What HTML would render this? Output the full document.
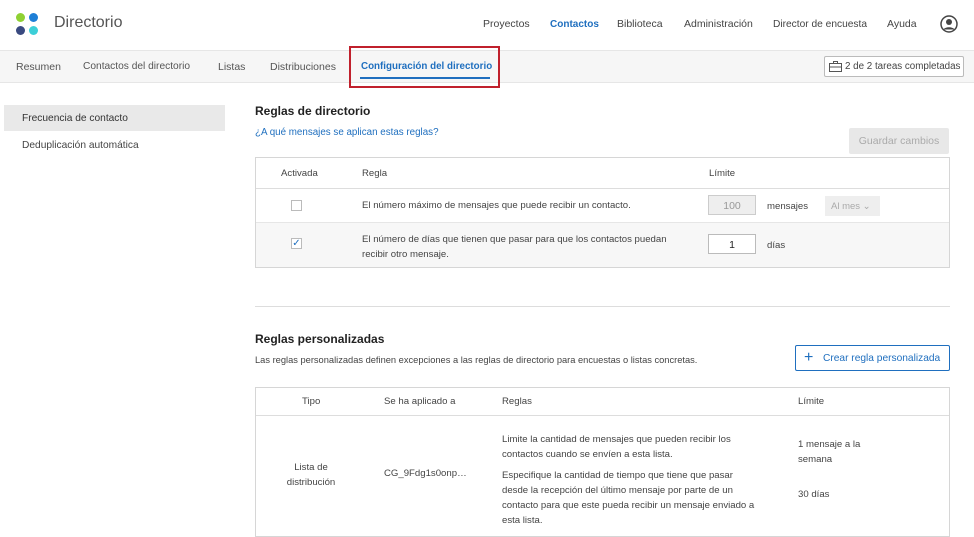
<!DOCTYPE html><html><head><meta charset="utf-8"><style>
*{box-sizing:border-box;margin:0;padding:0}
body{width:974px;height:529px;overflow:hidden;background:#fff;font-family:"Liberation Sans",sans-serif;color:#333;position:relative;font-size:10.5px}
.a{position:absolute;white-space:nowrap}
.nav span{position:absolute;top:18px;font-size:10.5px;color:#444}
.sub{top:50px;left:0;width:974px;height:33px;background:#f6f6f6;border-top:1px solid #e6e6e6;border-bottom:1px solid #e6e6e6}
.sub span{position:absolute;top:10px;font-size:10.5px;color:#555}
.t{border:1px solid #d6d6d6}
.h{font-size:9.6px;color:#444}
</style></head><body>
<div class="a" style="left:16px;top:13px;width:9px;height:9px;border-radius:50%;background:#8fd133"></div>
<div class="a" style="left:29px;top:13px;width:9px;height:9px;border-radius:50%;background:#1e7fd6"></div>
<div class="a" style="left:16px;top:26px;width:9px;height:9px;border-radius:50%;background:#3a4a80"></div>
<div class="a" style="left:29px;top:26px;width:9px;height:9px;border-radius:50%;background:#3ccfd8"></div>
<div class="a" style="left:54px;top:14px;font-size:16px;color:#555">Directorio</div>
<div class="nav">
<span style="left:483px">Proyectos</span>
<span style="left:550px;top:19px;color:#1f6fbf;font-weight:bold;font-size:10px">Contactos</span>
<span style="left:617px">Biblioteca</span>
<span style="left:684px">Administración</span>
<span style="left:773px;top:19px;font-size:10.2px">Director de encuesta</span>
<span style="left:887px">Ayuda</span>
</div>
<svg class="a" style="left:940px;top:15px" width="18" height="18" viewBox="0 0 18 18"><circle cx="9" cy="9" r="8" fill="none" stroke="#444" stroke-width="1.5"/><circle cx="9" cy="7" r="3" fill="#444"/><path d="M3.5 14.5c1.5-3 9.5-3 11 0" fill="#444"/></svg>
<div class="a sub">
<span style="left:16px">Resumen</span>
<span style="left:83px;top:10px;font-size:10.2px">Contactos del directorio</span>
<span style="left:218px">Listas</span>
<span style="left:270px">Distribuciones</span>
<span style="left:361px;top:10px;color:#1f6fbf;font-weight:bold;font-size:9.8px">Configuración del directorio</span>
<div class="a" style="left:360px;top:26px;width:130px;height:2px;background:#1f6fbf"></div>
<div class="a" style="left:824px;top:5px;width:140px;height:21px;border:1px solid #bbb;background:#fff;border-radius:2px;font-size:9.8px;color:#444;padding:4px 0 0 20px">2 de 2 tareas completadas</div>
<svg class="a" style="left:829px;top:10px" width="13" height="11"><rect x="0.5" y="2.5" width="12" height="8" fill="none" stroke="#555"/><rect x="4.5" y="0.5" width="4" height="2" fill="none" stroke="#555"/><line x1="0" y1="6" x2="13" y2="6" stroke="#555"/></svg>
</div>
<div class="a" style="left:349px;top:46px;width:151px;height:42px;border:2px solid #c0202c"></div>
<div class="a" style="left:4px;top:105px;width:221px;height:26px;background:#e9e9e9"></div>
<div class="a" style="left:22px;top:113px;font-size:10.2px">Frecuencia de contacto</div>
<div class="a" style="left:22px;top:140px;font-size:10.2px;color:#444">Deduplicación automática</div>
<div class="a" style="left:255px;top:104px;font-size:12px;font-weight:bold;color:#222">Reglas de directorio</div>
<div class="a" style="left:255px;top:127px;font-size:9.8px;color:#1f6fbf">¿A qué mensajes se aplican estas reglas?</div>
<div class="a" style="left:849px;top:128px;width:100px;height:26px;background:#e8e8e8;color:#aaa;font-size:10.5px;text-align:center;padding-top:7px;border-radius:2px">Guardar cambios</div>
<div class="a t" style="left:255px;top:157px;width:695px;height:111px">
<div class="a" style="left:0;top:30px;width:693px;height:1px;background:#ddd"></div>
<div class="a" style="left:0;top:64px;width:693px;height:45px;background:#f7f7f7;border-top:1px solid #e6e6e6"></div>
<div class="a h" style="left:25px;top:10px">Activada</div>
<div class="a h" style="left:106px;top:10px">Regla</div>
<div class="a h" style="left:453px;top:10px">Límite</div>
<div class="a" style="left:35px;top:42px;width:11px;height:11px;border:1px solid #bbb;background:#fff"></div>
<div class="a h" style="left:106px;top:42px">El número máximo de mensajes que puede recibir un contacto.</div>
<div class="a" style="left:452px;top:37px;width:48px;height:20px;background:#eee;border:1px solid #ccc;color:#999;text-align:center;padding-top:4px">100</div>
<div class="a h" style="left:511px;top:43px">mensajes</div>
<div class="a" style="left:569px;top:38px;width:55px;height:20px;background:#eee;color:#aaa;padding:5px 0 0 6px;font-size:9.5px">Al mes ⌄</div>
<div class="a" style="left:35px;top:80px;width:11px;height:11px;border:1px solid #bbb;background:#fff;color:#1f6fbf;font-size:10px;line-height:9px;text-align:center">✓</div>
<div class="a h" style="left:106px;top:74px;line-height:15px">El número de días que tienen que pasar para que los contactos puedan<br>recibir otro mensaje.</div>
<div class="a" style="left:452px;top:76px;width:48px;height:20px;background:#fff;border:1px solid #bbb;color:#222;text-align:center;padding-top:4px">1</div>
<div class="a h" style="left:511px;top:82px">días</div>
</div>
<div class="a" style="left:255px;top:306px;width:695px;height:1px;background:#ddd"></div>
<div class="a" style="left:255px;top:332px;font-size:12px;font-weight:bold;color:#222">Reglas personalizadas</div>
<div class="a h" style="left:255px;top:355px;font-size:9.3px">Las reglas personalizadas definen excepciones a las reglas de directorio para encuestas o listas concretas.</div>
<div class="a" style="left:795px;top:345px;width:155px;height:26px;border:1px solid #1f6fbf;border-radius:2px;color:#1f6fbf;font-size:10.2px;padding:7px 0 0 27px">Crear regla personalizada</div>
<div class="a" style="left:804px;top:349px;color:#1f6fbf;font-size:16px">+</div>
<div class="a t" style="left:255px;top:387px;width:695px;height:150px">
<div class="a" style="left:0;top:27px;width:693px;height:1px;background:#ddd"></div>
<div class="a h" style="left:46px;top:8px">Tipo</div>
<div class="a h" style="left:128px;top:8px">Se ha aplicado a</div>
<div class="a h" style="left:246px;top:8px">Reglas</div>
<div class="a h" style="left:542px;top:8px">Límite</div>
<div class="a h" style="left:25px;top:72px;line-height:15px;text-align:center;width:60px;white-space:normal">Lista de distribución</div>
<div class="a h" style="left:128px;top:80px">CG_9Fdg1s0onp…</div>
<div class="a h" style="left:246px;top:44px;line-height:15px">Limite la cantidad de mensajes que pueden recibir los<br>contactos cuando se envíen a esta lista.</div>
<div class="a h" style="left:246px;top:80px;line-height:15px">Especifique la cantidad de tiempo que tiene que pasar<br>desde la recepción del último mensaje por parte de un<br>contacto para que este pueda recibir un mensaje enviado a<br>esta lista.</div>
<div class="a h" style="left:542px;top:49px;line-height:15px">1 mensaje a la<br>semana</div>
<div class="a h" style="left:542px;top:101px">30 días</div>
</div>
</body></html>
